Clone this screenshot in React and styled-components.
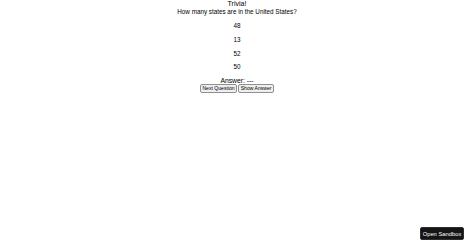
import React, { useState } from 'react'
import styled, { createGlobalStyle } from 'styled-components'

const GlobalStyle = createGlobalStyle`
    html, body {
        margin: 0;
        padding: 0;
        background: #ffffff;
    }
    body {
        font-family: "Liberation Sans", Arial, sans-serif;
        color: #000000;
    }
`

const Page = styled.div`
    display: flex;
    flex-direction: column;
    align-items: center;
    font-size: 6.3px;
    text-align: center;
`
const Title = styled.div`
    font-size: 7px;
    line-height: 1.1;
`
const Question = styled.div`
    line-height: 1.15;
`
const Option = styled.p`
    margin: 6.4px 0 0 0;
    line-height: 1.15;
    &:first-of-type {
        margin-top: 7.4px;
    }
    &:last-of-type {
        margin-bottom: 6.2px;
    }
`
const Answer = styled.div`
    font-size: 6.8px;
    line-height: 1.1;
`
const ButtonRow = styled.div`
    display: flex;
    gap: 1px;
`
const Button = styled.button`
    font-family: "Liberation Sans", Arial, sans-serif;
    font-size: 5.1px;
    line-height: 1;
    padding: 0 1.5px;
    height: 8.5px;
    background: #efefef;
    color: #000;
    border: 1px solid #8f8f8f;
    border-radius: 2px;
`
const SandboxButton = styled.button`
    position: fixed;
    right: 10px;
    bottom: 8px;
    width: 44px;
    height: 13px;
    padding: 0;
    font-family: "Liberation Sans", Arial, sans-serif;
    font-size: 5.8px;
    color: #ffffff;
    background: #151515;
    border: 1px solid #2e2e2e;
    border-radius: 2px;
`

const options = ['48', '13', '52', '50']

export default function App()
{
    const [shown, setShown] = useState(false)
    return (
        <>
            <GlobalStyle />
            <Page>
                <Title>Trivia!</Title>
                <Question>How many states are in the United States?</Question>
                {options.map((o) => <Option key={o}>{o}</Option>)}
                <Answer>Answer: {shown ? '50' : '---'}</Answer>
                <ButtonRow>
                    <Button onClick={() => setShown(false)}>Next Question</Button>
                    <Button onClick={() => setShown(true)}>Show Answer</Button>
                </ButtonRow>
            </Page>
            <SandboxButton>Open Sandbox</SandboxButton>
        </>
    )
}
